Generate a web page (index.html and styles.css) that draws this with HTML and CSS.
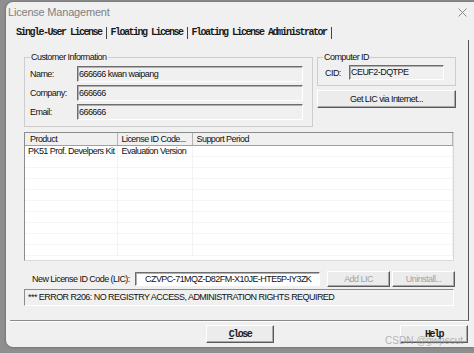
FILE: index.html
```html
<!DOCTYPE html>
<html lang="en">
<head>
    <meta charset="UTF-8">
    <meta name="viewport" content="width=device-width, initial-scale=1.0">
    <title>License Management</title>
    <link rel="stylesheet" href="styles.css">
</head>
<body>
    <div class="window">
        <div class="titlebar">
            <span class="title">License Management</span>
            <svg class="close-x" width="9" height="9" viewBox="0 0 9 9">
                <path d="M0.5 0.5L8.5 8.5M8.5 0.5L0.5 8.5" stroke="#8a8a8a" stroke-width="1" fill="none"/>
            </svg>
        </div>

        <div class="tabs">
            <div class="tab active">Single-User License</div>
            <div class="tab">Floating License</div>
            <div class="tab">Floating License Administrator</div>
        </div>

        <div class="panel">
            <div class="top-row">
                <fieldset class="group customer">
                    <legend>Customer Information</legend>
                    <div class="form-grid">
                        <span>Name:</span>
                        <div class="field">666666 kwan waipang</div>
                        <span>Company:</span>
                        <div class="field">666666</div>
                        <span>Email:</span>
                        <div class="field">666666</div>
                    </div>
                </fieldset>

                <div class="computer-col">
                    <fieldset class="group computer">
                        <legend>Computer ID</legend>
                        <div class="cid-row">
                            <span class="cid-label">CID:</span>
                            <div class="field cid">CEUF2-DQTPE</div>
                        </div>
                    </fieldset>
                    <button class="btn wide">Get LIC via Internet...</button>
                </div>
            </div>

            <div class="list">
                <table>
                    <colgroup>
                        <col class="col-product">
                        <col class="col-code">
                        <col>
                    </colgroup>
                    <thead>
                        <tr><th>Product</th><th>License ID Code...</th><th>Support Period</th></tr>
                    </thead>
                    <tbody>
                        <tr><td>PK51 Prof. Develpers Kit</td><td>Evaluation Version</td><td></td></tr>
                        <tr><td></td><td></td><td></td></tr>
                        <tr><td></td><td></td><td></td></tr>
                        <tr><td></td><td></td><td></td></tr>
                        <tr><td></td><td></td><td></td></tr>
                        <tr><td></td><td></td><td></td></tr>
                        <tr><td></td><td></td><td></td></tr>
                        <tr><td></td><td></td><td></td></tr>
                        <tr><td></td><td></td><td></td></tr>
                        <tr><td></td><td></td><td></td></tr>
                    </tbody>
                </table>
            </div>

            <div class="lic-row">
                <span class="lic-label">New License ID Code (LIC):</span>
                <div class="field lic-input">CZVPC-71MQZ-D82FM-X10JE-HTE5P-IY3ZK</div>
                <button class="btn small disabled">Add LIC</button>
                <button class="btn small disabled">Uninstall...</button>
            </div>

            <div class="status">*** ERROR R206: NO REGISTRY ACCESS, ADMINISTRATION RIGHTS REQUIRED</div>
        </div>

        <div class="footer">
            <button class="btn mono close-btn"><u>C</u>lose</button>
            <button class="btn mono help-btn">Help</button>
        </div>
        <span class="watermark">CSDN @gwpscut</span>
    </div>
</body>
</html>
```
FILE: styles.css
```css
* {
    margin: 0;
    padding: 0;
    box-sizing: border-box;
}
body {
    font-family: "Liberation Sans", Arial, sans-serif;
    font-size: 9px;
    letter-spacing: -0.55px;
    color: #111;
    background: #8f8f8f;
    height: 353px;
    overflow: hidden;
    padding: 2px 0 0 6px;
}
.window {
    position: relative;
    width: 468px;
    height: 345px;
    background: #f0f0f0;
    border-radius: 7px 0 0 7px;
    box-shadow: 0 0 3px rgba(0, 0, 0, 0.35);
}

/* Заголовок окна */
.titlebar {
    height: 20px;
    display: flex;
    align-items: center;
    justify-content: space-between;
    padding: 0 7px 0 2px;
}
.title {
    font-size: 11px;
    letter-spacing: -0.2px;
    color: #808080;
}

/* Вкладки */
.tabs {
    display: flex;
    height: 16px;
    margin-top: 2px;
    padding-left: 6px;
    font-family: "Liberation Mono", monospace;
    font-size: 10px;
    font-weight: bold;
    letter-spacing: -1.5px;
    color: #1a1a1a;
}
.tab {
    height: 12px;
    margin-top: 3px;
    line-height: 12px;
    padding: 0 4px;
    border-right: 1px solid #444;
}

/* Панель вкладки */
.panel {
    margin-left: 4px;
    width: 459px;
    height: 281px;
    border-right: 1px solid #555;
    border-bottom: 1px solid #8a8a8a;
    box-shadow: 0 1px 0 #fff;
    padding: 11px 0 0 14px;
}
.top-row {
    display: flex;
    gap: 4px;
    align-items: flex-start;
}
.group {
    border: 1px solid #cdcdcd;
    padding: 3px 5px 6px 5px;
}
.group legend {
    padding: 0 1px;
    line-height: 12px;
}
.customer {
    width: 289px;
}
.form-grid {
    display: grid;
    grid-template-columns: 47px 226px;
    row-gap: 3px;
    align-items: center;
}
.field {
    height: 16px;
    line-height: 14px;
    padding-left: 1px;
    background: #f0f0f0;
    border: 1px solid;
    border-color: #6d6d6d #fff #fff #6d6d6d;
    box-shadow: inset 1px 1px 0 #b0b0b0;
    white-space: nowrap;
    overflow: hidden;
}
.computer-col {
    width: 139px;
}
.computer {
    padding-top: 2px;
    padding-bottom: 5px;
}
.cid-row {
    display: flex;
    align-items: center;
}
.cid-label {
    width: 26px;
    padding-left: 2px;
}
.cid {
    width: 95px;
    height: 15px;
    line-height: 13px;
}

/* Кнопки */
.btn {
    font-family: "Liberation Sans", Arial, sans-serif;
    font-size: 9px;
    letter-spacing: -0.55px;
    color: #111;
    height: 18px;
    background: #ececec;
    border: 1px solid;
    border-color: #fff #5a5a5a #5a5a5a #fff;
    box-shadow: inset -1px -1px 0 #a8a8a8;
}
.wide {
    width: 139px;
    margin-top: 4px;
}
.small {
    width: 63px;
    height: 16px;
}
.disabled {
    color: #a3a3a3;
}
.mono {
    font-family: "Liberation Mono", monospace;
    font-size: 10px;
    font-weight: bold;
    letter-spacing: -1.5px;
    color: #1a1a1a;
    width: 68px;
}

/* Список продуктов */
.list {
    margin-top: 5px;
    width: 430px;
    height: 129px;
    background: #fff;
    border: 1px solid;
    border-color: #8c8c8c #d8d8d8 #d8d8d8 #8c8c8c;
    overflow: hidden;
}
.list table {
    width: 100%;
    border-collapse: collapse;
    table-layout: fixed;
}
.col-product {
    width: 92px;
}
.col-code {
    width: 75px;
}
.list th {
    height: 12px;
    line-height: 10px;
    font-weight: normal;
    text-align: left;
    padding-left: 5px;
    background: #f0f0f0;
    border-right: 1px solid #b4b4b4;
    border-bottom: 1px solid #a0a0a0;
    white-space: nowrap;
    overflow: hidden;
}
.list th + th {
    padding-left: 4px;
}
.list td {
    height: 11px;
    line-height: 10px;
    padding-left: 3px;
    border-right: 1px solid #f3f3f3;
    border-bottom: 1px solid #f5f5f5;
    white-space: nowrap;
    overflow: hidden;
}
.list td + td {
    padding-left: 4px;
}

/* Ввод кода лицензии */
.lic-row {
    display: flex;
    align-items: center;
    height: 16px;
    margin-top: 10px;
}
.lic-label {
    width: 111px;
    padding-left: 8px;
}
.lic-input {
    width: 185px;
    height: 14px;
    line-height: 12px;
    padding-left: 9px;
    background: #fff;
    margin-right: 7px;
}
.lic-row .btn + .btn {
    margin-left: 2px;
}

/* Строка состояния */
.status {
    margin-top: 2px;
    width: 430px;
    height: 17px;
    line-height: 15px;
    padding-left: 3px;
    border: 1px solid;
    border-color: #8c8c8c #fff #fff #8c8c8c;
    white-space: nowrap;
}

/* Нижние кнопки */
.footer {
    display: grid;
    grid-template-columns: 1fr 68px 1fr;
    margin-top: 4px;
}
.close-btn {
    grid-column: 2;
}
.help-btn {
    grid-column: 3;
    justify-self: end;
    margin-right: 6px;
}
.watermark {
    position: absolute;
    right: 11px;
    bottom: 1px;
    font-size: 10px;
    line-height: 11px;
    letter-spacing: 0;
    color: rgba(150, 150, 150, 0.7);
}
```
